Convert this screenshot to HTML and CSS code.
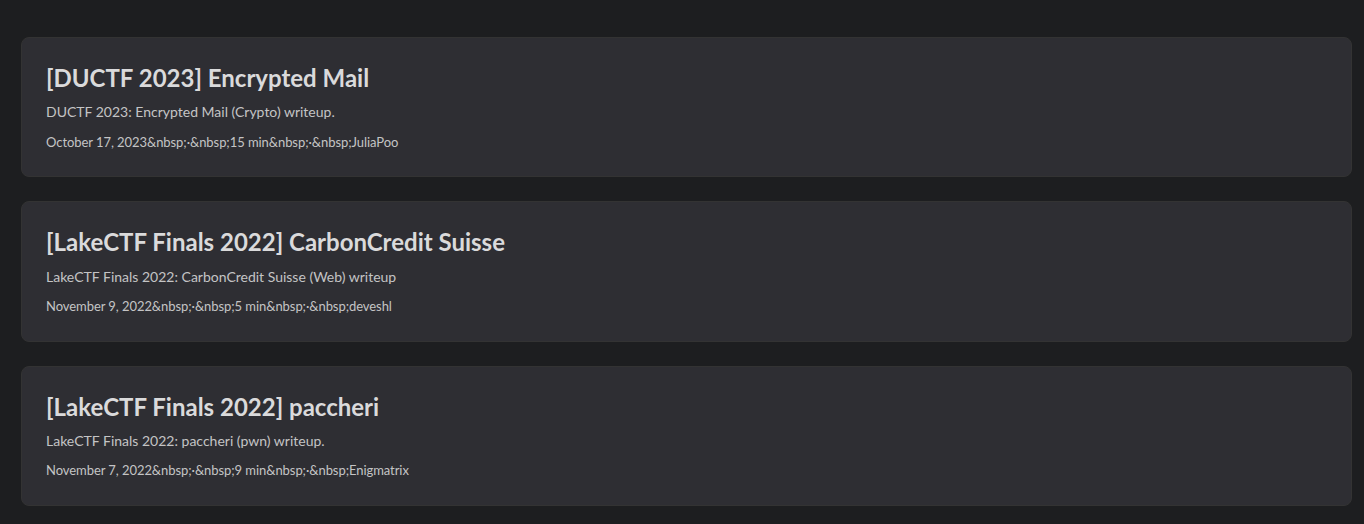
FILE: index.html
```html
<!DOCTYPE html>
<html lang="en">
<head>
<meta charset="utf-8">
<link rel="stylesheet" href="styles.css">
</head>
<body>
<main class="main">
  <article class="post-entry">
    <header class="entry-header"><h2>[DUCTF 2023] Encrypted Mail</h2></header>
    <div class="entry-content"><p>DUCTF 2023: Encrypted Mail (Crypto) writeup.</p></div>
    <footer class="entry-footer">October 17, 2023&amp;nbsp;·&amp;nbsp;15 min&amp;nbsp;·&amp;nbsp;JuliaPoo</footer>
  </article>
  <article class="post-entry">
    <header class="entry-header"><h2>[LakeCTF Finals 2022] CarbonCredit Suisse</h2></header>
    <div class="entry-content"><p>LakeCTF Finals 2022: CarbonCredit Suisse (Web) writeup</p></div>
    <footer class="entry-footer">November 9, 2022&amp;nbsp;·&amp;nbsp;5 min&amp;nbsp;·&amp;nbsp;deveshl</footer>
  </article>
  <article class="post-entry">
    <header class="entry-header"><h2>[LakeCTF Finals 2022] paccheri</h2></header>
    <div class="entry-content"><p>LakeCTF Finals 2022: paccheri (pwn) writeup.</p></div>
    <footer class="entry-footer">November 7, 2022&amp;nbsp;·&amp;nbsp;9 min&amp;nbsp;·&amp;nbsp;Enigmatrix</footer>
  </article>
</main>
</body>
</html>
```
FILE: styles.css
```css
html, body {
  margin: 0;
  padding: 0;
  background: #1d1e20;
}
body {
  font-family: Lato, "Open Sans", sans-serif;
  color: #dadadb;
  line-height: 1.6;
  font-size: 18px;
}
.main {
  padding: 37px 12px 0 21px;
  display: flex;
  flex-direction: column;
  gap: 24px;
}
.post-entry {
  background: #2e2e33;
  border: 1px solid #333;
  border-radius: 8px;
  padding: 24px;
}
.entry-header h2 {
  margin: 0;
  font-size: 24px;
  line-height: 1.3;
  font-weight: 700;
  color: #dadadb;
}
.entry-content {
  margin: 8px 0;
  color: #c4c4c5;
  font-size: 14px;
  line-height: 1.6;
}
.entry-content p {
  margin: 0;
}
.entry-footer {
  color: #c4c4c5;
  font-size: 13px;
  letter-spacing: -0.005em;
}
```
